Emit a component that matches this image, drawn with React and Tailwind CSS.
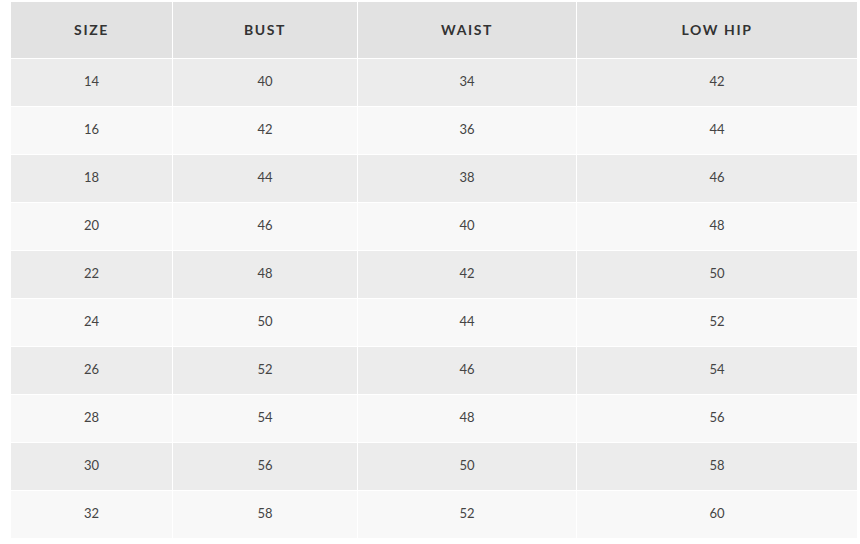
import React from 'react';

const rows = [
  ['14', '40', '34', '42'],
  ['16', '42', '36', '44'],
  ['18', '44', '38', '46'],
  ['20', '46', '40', '48'],
  ['22', '48', '42', '50'],
  ['24', '50', '44', '52'],
  ['26', '52', '46', '54'],
  ['28', '54', '48', '56'],
  ['30', '56', '50', '58'],
  ['32', '58', '52', '60'],
];

const headers = ['SIZE', 'BUST', 'WAIST', 'LOW HIP'];

const App = () => {
  return (
    <div className="bg-white w-[860px] h-[544px] pl-[10px] pt-[2px] font-['Lato','Liberation_Sans',sans-serif]">
      <table className="w-[847px] border-collapse table-fixed">
        <colgroup>
          <col className="w-[162px]" />
          <col className="w-[185px]" />
          <col className="w-[219px]" />
          <col className="w-[281px]" />
        </colgroup>
        <thead>
          <tr className="bg-[#e2e2e2] h-[56px]">
            {headers.map((h) => (
              <th key={h} className="border border-white border-t-0 text-[14px] font-bold tracking-[1.6px] text-[#333] text-center align-middle">{h}</th>
            ))}
          </tr>
        </thead>
        <tbody>
          {rows.map((r, i) => (
            <tr key={r[0]} className={i % 2 === 0 ? 'bg-[#ececec] h-[48px]' : 'bg-[#f8f8f8] h-[48px]'}>
              {r.map((c, j) => (
                <td key={j} className="border border-white text-[13px] text-[#444] text-center align-middle">{c}</td>
              ))}
            </tr>
          ))}
        </tbody>
      </table>
    </div>
  )
}

export default App
